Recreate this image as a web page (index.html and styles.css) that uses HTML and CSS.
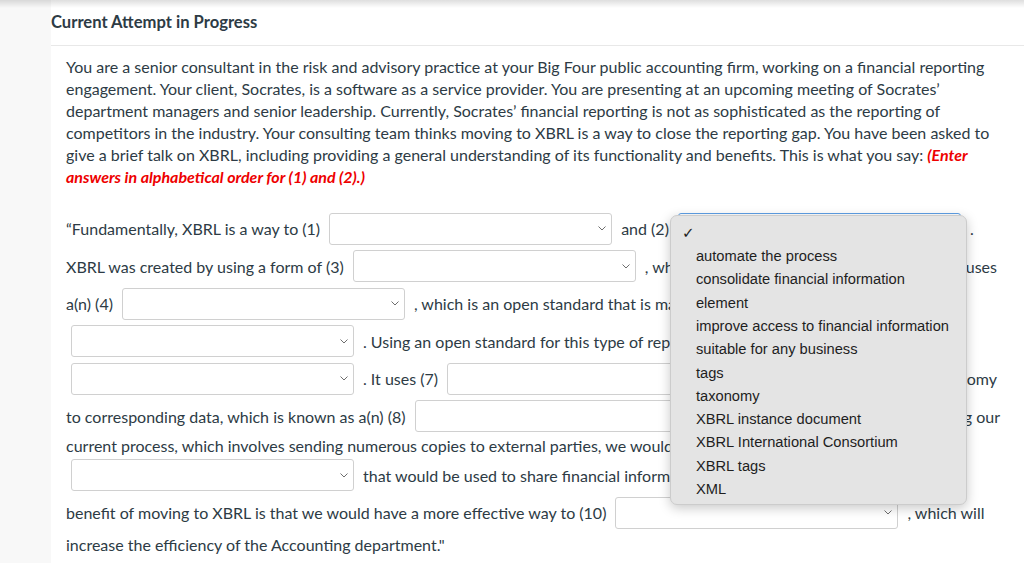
FILE: index.html
```html
<!DOCTYPE html>
<html lang="en">
<head>
    <meta charset="UTF-8">
    <meta name="viewport" content="width=device-width, initial-scale=1.0">
    <title>Current Attempt in Progress</title>
    <link rel="stylesheet" href="styles.css">
</head>
<body>
    <div class="shade"></div>
    <div class="page">
        <div class="side"></div>
        <div class="main">
            <h2 class="head">Current Attempt in Progress</h2>
            <div class="content">
                <p class="intro">You are a senior consultant in the risk and advisory practice at your Big Four public accounting firm, working on a financial reporting<br>engagement. Your client, Socrates, is a software as a service provider. You are presenting at an upcoming meeting of Socrates’<br>department managers and senior leadership. Currently, Socrates’ financial reporting is not as sophisticated as the reporting of<br>competitors in the industry. Your consulting team thinks moving to XBRL is a way to close the reporting gap. You have been asked to<br>give a brief talk on XBRL, including providing a general understanding of its functionality and benefits. This is what you say: <b class="note">(Enter<br>answers in alphabetical order for (1) and (2).)</b></p>

                <div class="rows">
                    <div class="row">
                        <span>“Fundamentally, XBRL is a way to (1)</span>
                        <div class="sel"><svg class="chev" width="8" height="5" viewBox="0 0 8 5"><path d="M0.5 0.5 L4 4 L7.5 0.5" /></svg></div>
                        <span>and (2)</span>
                        <div class="sel focus">
                            <svg class="chev" width="8" height="5" viewBox="0 0 8 5"><path d="M0.5 0.5 L4 4 L7.5 0.5" /></svg>
                            <ul class="menu">
                                <li class="picked"><span class="check">✓</span></li>
                                <li>automate the process</li>
                                <li>consolidate financial information</li>
                                <li>element</li>
                                <li>improve access to financial information</li>
                                <li>suitable for any business</li>
                                <li>tags</li>
                                <li>taxonomy</li>
                                <li>XBRL instance document</li>
                                <li>XBRL International Consortium</li>
                                <li>XBRL tags</li>
                                <li>XML</li>
                            </ul>
                        </div>
                        <span>.</span>
                    </div>
                    <div class="row">
                        <span>XBRL was created by using a form of (3)</span>
                        <div class="sel"><svg class="chev" width="8" height="5" viewBox="0 0 8 5"><path d="M0.5 0.5 L4 4 L7.5 0.5" /></svg></div>
                        <span class="fill">, which is a markup language.</span>
                        <span class="end">XBRL uses</span>
                    </div>
                    <div class="row">
                        <span>a(n) (4)</span>
                        <div class="sel"><svg class="chev" width="8" height="5" viewBox="0 0 8 5"><path d="M0.5 0.5 L4 4 L7.5 0.5" /></svg></div>
                        <span class="fill">, which is an open standard that is managed by the</span>
                    </div>
                    <div class="row">
                        <div class="sel"><svg class="chev" width="8" height="5" viewBox="0 0 8 5"><path d="M0.5 0.5 L4 4 L7.5 0.5" /></svg></div>
                        <span class="fill">. Using an open standard for this type of reporting is</span>
                    </div>
                    <div class="row">
                        <div class="sel"><svg class="chev" width="8" height="5" viewBox="0 0 8 5"><path d="M0.5 0.5 L4 4 L7.5 0.5" /></svg></div>
                        <span>. It uses (7)</span>
                        <div class="sel"><svg class="chev" width="8" height="5" viewBox="0 0 8 5"><path d="M0.5 0.5 L4 4 L7.5 0.5" /></svg></div>
                        <span class="fill">to match a</span>
                        <span class="end">taxonomy</span>
                    </div>
                    <div class="row">
                        <span>to corresponding data, which is known as a(n) (8)</span>
                        <div class="sel"><svg class="chev" width="8" height="5" viewBox="0 0 8 5"><path d="M0.5 0.5 L4 4 L7.5 0.5" /></svg></div>
                        <span class="fill">. By</span>
                        <span class="end wide">changing our</span>
                    </div>
                    <div class="row text">
                        <span class="fill">current process, which involves sending numerous copies to external parties, we would create a(n)</span>
                    </div>
                    <div class="row">
                        <div class="sel"><svg class="chev" width="8" height="5" viewBox="0 0 8 5"><path d="M0.5 0.5 L4 4 L7.5 0.5" /></svg></div>
                        <span class="fill">that would be used to share financial information.</span>
                    </div>
                    <div class="row">
                        <span>benefit of moving to XBRL is that we would have a more effective way to (10)</span>
                        <div class="sel"><svg class="chev" width="8" height="5" viewBox="0 0 8 5"><path d="M0.5 0.5 L4 4 L7.5 0.5" /></svg></div>
                        <span>, which will</span>
                    </div>
                    <div class="row last">
                        <span>increase the efficiency of the Accounting department."</span>
                    </div>
                </div>
            </div>
        </div>
    </div>
</body>
</html>
```

FILE: styles.css
```css
html, body{
    margin: 0;
    background-color: white;
}
body{
    font-family: Lato, "Open Sans", sans-serif;
    font-size: 16px;
    color: rgb(45, 59, 69);
    overflow: hidden;
}
.shade{
    position: absolute;
    top: 0;
    left: 0;
    right: 0;
    height: 8px;
    background: linear-gradient(to bottom, rgba(0, 0, 0, 0.13), rgba(0, 0, 0, 0));
}
.page{
    display: flex;
    height: 563px;
}
.side{
    flex: none;
    width: 51px;
    background-color: rgb(248, 248, 248);
}
.main{
    flex: 1;
    min-width: 0;
}
.head{
    margin: 0;
    padding: 11px 0 12px 0;
    font-size: 16.6px;
    line-height: 22px;
    font-weight: 700;
    border-bottom: 1px solid rgb(232, 232, 232);
}
.content{
    padding: 10px 27px 0 15px;
}
.intro{
    margin: 0;
    line-height: 22px;
    white-space: nowrap;
}
.note{
    color: rgb(238, 0, 0);
    font-style: italic;
}
.rows{
    margin-top: 22px;
}
.row{
    display: flex;
    align-items: center;
    height: 37.5px;
    white-space: nowrap;
}
.row.text{
    height: 21.5px;
}
.row.last{
    height: 26px;
}
.fill{
    flex: 1;
    min-width: 0;
    overflow: hidden;
}
.end{
    margin-left: 4px;
}
.end.wide{
    margin-right: -3px;
}
.sel{
    position: relative;
    flex: none;
    box-sizing: border-box;
    width: 283px;
    height: 32px;
    margin: 0 9px;
    border: 1px solid rgb(208, 208, 208);
    border-radius: 3px;
    background-color: white;
    display: flex;
    align-items: center;
    justify-content: flex-end;
    padding-right: 5px;
}
.row > .sel:first-child{
    margin-left: 5px;
}
.chev path{
    fill: none;
    stroke: rgb(110, 110, 110);
    stroke-width: 1;
}
.sel.focus{
    border-color: rgb(95, 160, 230);
}
.menu{
    position: absolute;
    z-index: 5;
    top: 1px;
    left: -9px;
    box-sizing: border-box;
    width: 297px;
    height: 290px;
    margin: 0;
    padding: 6px 0 4px 0;
    list-style: none;
    background-color: rgb(228, 228, 228);
    border: 1px solid rgb(204, 204, 204);
    border-radius: 7px;
    box-shadow: 0 3px 12px rgba(0, 0, 0, 0.22);
    font-family: "Liberation Sans", Arial, sans-serif;
    font-size: 14.7px;
    color: rgb(30, 30, 30);
}
.menu li{
    height: 23.3px;
    line-height: 23.3px;
    padding-left: 25px;
}
.menu li.picked{
    padding-left: 11px;
}
.check{
    font-family: "DejaVu Sans", sans-serif;
    font-size: 15px;
}
```
